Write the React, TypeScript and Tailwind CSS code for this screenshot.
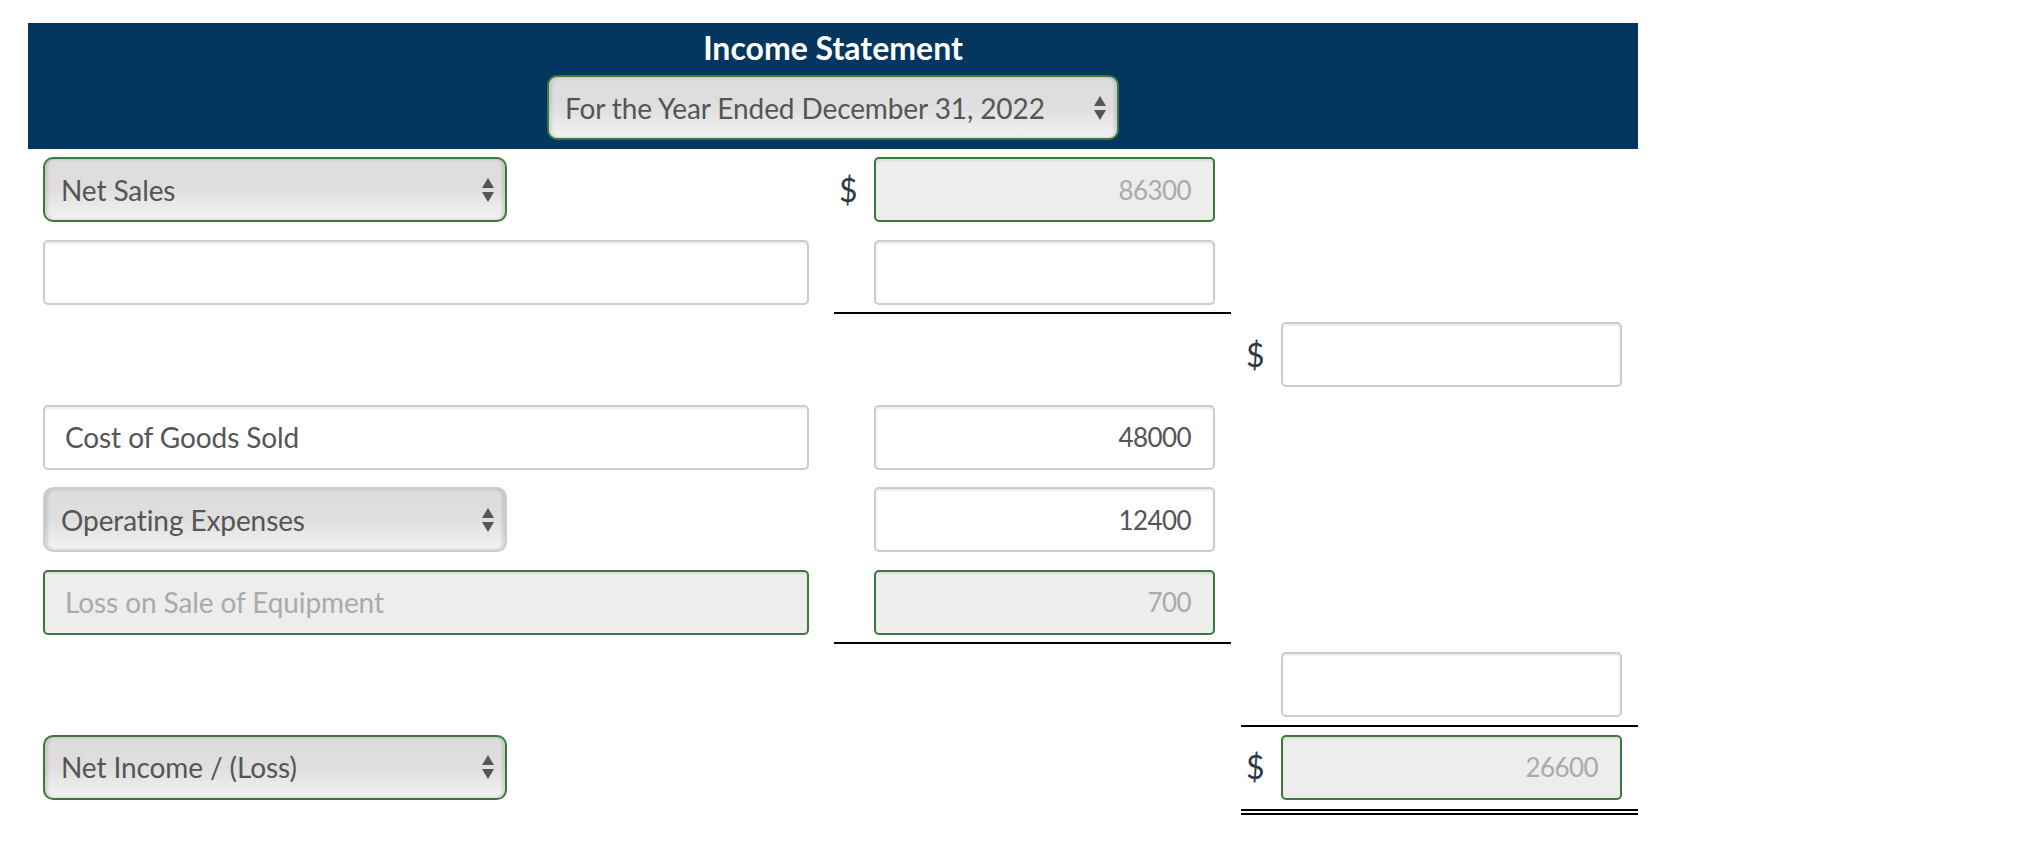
import React from "react";

const FONT = "font-['Lato','Open_Sans',sans-serif]";

function Arrows() {
  return (
    <svg width="12" height="24" viewBox="0 0 12 24" className="shrink-0">
      <polygon points="0,10 6,0 12,10" fill="#555555" />
      <polygon points="0,14 12,14 6,24" fill="#555555" />
    </svg>
  );
}

function Select({ label, green, className }: { label: string; green: boolean; className: string }) {
  return (
    <div
      className={`${className} h-[65px] flex items-center justify-between pl-[16px] pr-[11px] rounded-[10px] border-2 ${
        green ? "border-[#3b7a3b]" : "border-[#cccccc]"
      } bg-[linear-gradient(to_bottom,#dcdcdc_0%,#dfdfdf_50%,#e9e9e9_75%,#f3f3f3_100%)] shadow-[inset_3px_0_3px_rgba(0,0,0,0.10),inset_-3px_0_3px_rgba(0,0,0,0.10)]`}
    >
      <span className="text-[28px] leading-none text-[#555555] tracking-[-0.1px]">{label}</span>
      <Arrows />
    </div>
  );
}

function TextBox({ value, disabled, align }: { value?: string; disabled?: boolean; align: "left" | "right" }) {
  return (
    <div
      className={`w-full h-[65px] flex items-center rounded-[5px] border-2 ${
        disabled ? "border-[#3b7a3b] bg-[#ededed] text-[#aaaaaa]" : "border-[#cccccc] bg-white text-[#555555]"
      } shadow-[inset_0_2px_2px_rgba(0,0,0,0.07)] ${
        align === "right"
          ? "justify-end pr-[22px] text-[26px] tracking-[-0.6px]"
          : "justify-start pl-[20px] text-[28px] tracking-[-0.1px]"
      } leading-none`}
    >
      {value}
    </div>
  );
}

function Dollar({ show }: { show: boolean }) {
  return (
    <div className="w-[40px] pl-[5px] shrink-0 text-[32px] leading-none text-[#2d3b48]">{show ? "$" : ""}</div>
  );
}

function AmountCell({
  show,
  value,
  disabled,
  dollar,
  line,
}: {
  show: boolean;
  value?: string;
  disabled?: boolean;
  dollar?: boolean;
  line?: "single" | "double";
}) {
  const border =
    line === "single"
      ? "border-b-2 border-black"
      : line === "double"
      ? "border-b-[6px] border-double border-black"
      : "border-b-2 border-transparent";
  return (
    <div className={`pt-[8px] ${border} flex items-start`}>
      {show && (
        <div className="flex items-center w-full">
          <Dollar show={!!dollar} />
          <div className="w-[341px]">
            <TextBox value={value} disabled={disabled} align="right" />
          </div>
        </div>
      )}
    </div>
  );
}

type Cell = { value?: string; disabled?: boolean; dollar?: boolean; line?: "single" | "double"; show: boolean };
type Row = {
  label?: { kind: "select" | "input"; text: string; green?: boolean; disabled?: boolean } | null;
  c1: Cell;
  c2: Cell;
  h: string;
};

export default function App() {
  const rows: Row[] = [
    {
      label: { kind: "select", text: "Net Sales", green: true },
      c1: { show: true, value: "86300", disabled: true, dollar: true },
      c2: { show: false },
      h: "h-[82.5px]",
    },
    {
      label: { kind: "input", text: "" },
      c1: { show: true, value: "", line: "single" },
      c2: { show: false },
      h: "h-[82.5px]",
    },
    {
      label: null,
      c1: { show: false },
      c2: { show: true, value: "", dollar: true },
      h: "h-[82.5px]",
    },
    {
      label: { kind: "input", text: "Cost of Goods Sold" },
      c1: { show: true, value: "48000" },
      c2: { show: false },
      h: "h-[82.5px]",
    },
    {
      label: { kind: "select", text: "Operating Expenses", green: false },
      c1: { show: true, value: "12400" },
      c2: { show: false },
      h: "h-[82.5px]",
    },
    {
      label: { kind: "input", text: "Loss on Sale of Equipment", disabled: true },
      c1: { show: true, value: "700", disabled: true, line: "single" },
      c2: { show: false },
      h: "h-[82.5px]",
    },
    {
      label: null,
      c1: { show: false },
      c2: { show: true, value: "", line: "single" },
      h: "h-[82.5px]",
    },
    {
      label: { kind: "select", text: "Net Income / (Loss)", green: true },
      c1: { show: false },
      c2: { show: true, value: "26600", disabled: true, dollar: true, line: "double" },
      h: "h-[88px]",
    },
  ];

  return (
    <div className={`${FONT} w-[2032px] h-[860px] bg-white pt-[23px] pl-[28px]`}>
      <div className="w-[1610px]">
        <div className="h-[126px] bg-[#04365f] flex flex-col items-center pt-[6px]">
          <div className="text-[32px] leading-[38px] font-bold text-white">Income Statement</div>
          <div className="mt-[8px]">
            <Select label="For the Year Ended December 31, 2022" green={true} className="w-[572px]" />
          </div>
        </div>
        {rows.map((r, i) => (
          <div key={i} className={`grid grid-cols-[796px_397px_397px] gap-x-[10px] ${r.h}`}>
            <div className="pt-[8px] px-[15px]">
              {r.label &&
                (r.label.kind === "select" ? (
                  <Select label={r.label.text} green={!!r.label.green} className="w-[464px]" />
                ) : (
                  <TextBox value={r.label.text} disabled={r.label.disabled} align="left" />
                ))}
            </div>
            <AmountCell {...r.c1} />
            <AmountCell {...r.c2} />
          </div>
        ))}
      </div>
    </div>
  );
}
